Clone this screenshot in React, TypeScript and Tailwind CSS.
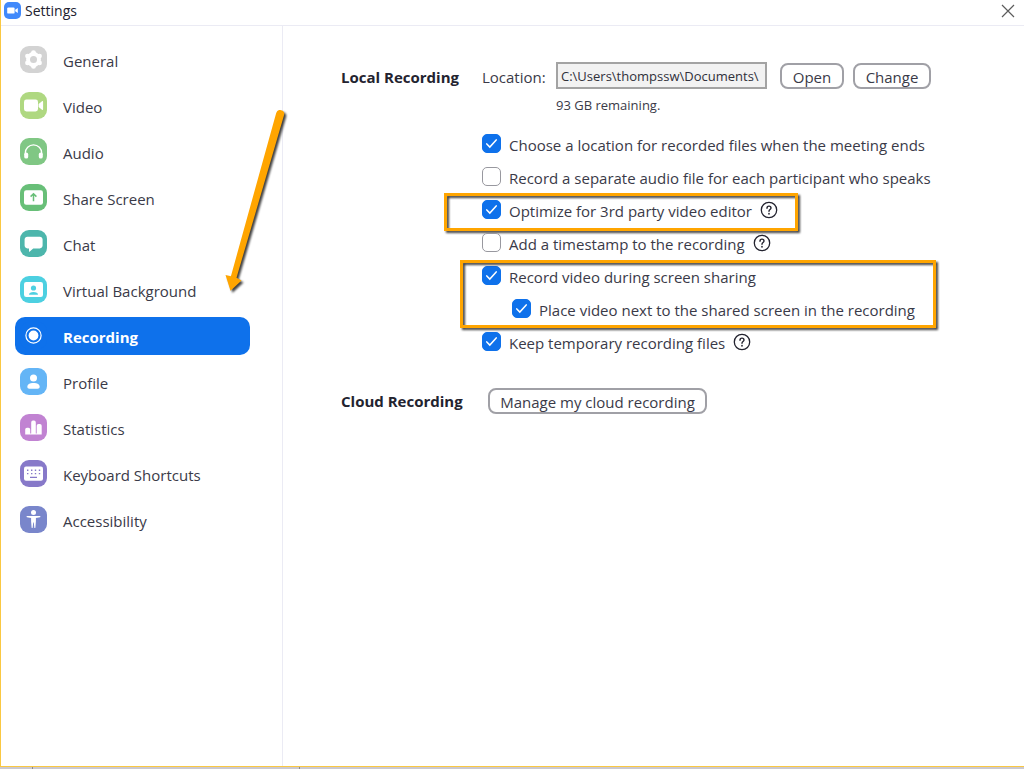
import type { ReactNode } from 'react';

interface NavItem {
  label: string;
  color: string;
  icon: ReactNode;
}

const NAV_ITEMS: NavItem[] = [
  {
    label: 'General',
    color: 'bg-[#d3d3d3]',
    icon: (
      <>
        <g fill="#fff">
          <circle cx="13.5" cy="13.5" r="7.4" />
          <circle cx="13.5" cy="6.6" r="2.4" />
          <circle cx="19.5" cy="10.1" r="2.4" />
          <circle cx="19.5" cy="16.9" r="2.4" />
          <circle cx="13.5" cy="20.4" r="2.4" />
          <circle cx="7.5" cy="16.9" r="2.4" />
          <circle cx="7.5" cy="10.1" r="2.4" />
        </g>
        <circle cx="13.5" cy="13.5" r="3.5" fill="#d3d3d3" />
      </>
    ),
  },
  {
    label: 'Video',
    color: 'bg-[#afd881]',
    icon: (
      <g fill="#fff">
        <rect x="4" y="7.5" width="14" height="12" rx="2.4" />
        <path d="M18.6 11.9 22 9.3c.5-.4 1.1-.1 1.1.5v7.4c0 .6-.6.9-1.1.5l-3.4-2.6z" />
      </g>
    ),
  },
  {
    label: 'Audio',
    color: 'bg-[#80c784]',
    icon: (
      <>
        <path d="M5.3 17v-2a8.2 8.2 0 0 1 16.4 0v2" fill="none" stroke="#fff" strokeWidth="1.3" />
        <rect x="4.2" y="14.6" width="4" height="6" rx="1.9" fill="#fff" />
        <rect x="18.8" y="14.6" width="4" height="6" rx="1.9" fill="#fff" />
      </>
    ),
  },
  {
    label: 'Share Screen',
    color: 'bg-[#68bf78]',
    icon: (
      <>
        <rect x="4" y="6.2" width="19" height="14.6" rx="2.2" fill="#fff" />
        <path d="M13.5 17.3v-7M10.6 12.6l2.9-2.9 2.9 2.9" fill="none" stroke="#68bf78" strokeWidth="1.5" />
      </>
    ),
  },
  {
    label: 'Chat',
    color: 'bg-[#4db6ac]',
    icon: (
      <path
        d="M7.4 6.8h12.4c1.6 0 2.8 1.2 2.8 2.8v6c0 1.6-1.2 2.8-2.8 2.8h-6.6l-3.4 3.2c-.4.4-.8.2-.8-.3v-2.9H7.4c-1.6 0-2.8-1.2-2.8-2.8v-6c0-1.6 1.2-2.8 2.8-2.8z"
        fill="#fff"
      />
    ),
  },
  {
    label: 'Virtual Background',
    color: 'bg-[#4dd0e1]',
    icon: (
      <>
        <rect x="4" y="6" width="19" height="15" rx="2.2" fill="#fff" />
        <circle cx="13.5" cy="12" r="2.6" fill="#4dd0e1" />
        <path d="M9 18.8c0-2 1.8-2.9 4.5-2.9s4.5.9 4.5 2.9z" fill="#4dd0e1" />
      </>
    ),
  },
  {
    label: 'Recording',
    color: 'bg-[#0e71eb]',
    icon: (
      <>
        <circle cx="13.5" cy="13.5" r="7.6" fill="none" stroke="#fff" strokeWidth="1.2" />
        <circle cx="13.5" cy="13.5" r="4.9" fill="#fff" />
      </>
    ),
  },
  {
    label: 'Profile',
    color: 'bg-[#64b5f6]',
    icon: (
      <g fill="#fff">
        <circle cx="13.5" cy="9.9" r="3.5" />
        <path d="M7.3 18.7c0-2.5 2.4-3.8 6.2-3.8s6.2 1.3 6.2 3.8c0 1.3-.8 2-2 2H9.3c-1.2 0-2-.7-2-2z" />
      </g>
    ),
  },
  {
    label: 'Statistics',
    color: 'bg-[#c183d2]',
    icon: (
      <path
        d="M5.2 20.5v-5a1.8 1.8 0 0 1 1.8-1.8h1.4a1.8 1.8 0 0 1 1.8 1.8v3.9h1V8.4A1.8 1.8 0 0 1 13 6.6h1a1.8 1.8 0 0 1 1.8 1.8v11h.9v-7.6a1.8 1.8 0 0 1 1.8-1.8h1.4a1.8 1.8 0 0 1 1.8 1.8v8.7z"
        fill="#fff"
      />
    ),
  },
  {
    label: 'Keyboard Shortcuts',
    color: 'bg-[#8779c9]',
    icon: (
      <>
        <rect x="4" y="6.5" width="19" height="14.2" rx="2" fill="#fff" />
        <path
          d="M7 10.2h1.4M11 10.2h1.4M14.8 10.2h1.4M18.8 10.2h1.4M7 13.6h1.4M11 13.6h1.4M14.8 13.6h1.4M18.8 13.6h1.4M10 17.4h7"
          stroke="#8779c9"
          strokeWidth="1.4"
        />
      </>
    ),
  },
  {
    label: 'Accessibility',
    color: 'bg-[#7986cb]',
    icon: (
      <g fill="#fff">
        <circle cx="13.5" cy="6.6" r="2.5" />
        <path d="M7 10h13c.6 0 .6 1.1 0 1.3l-4.1.8v3.4l-.5 6c-.1.8-1 .8-1.1 0l-.5-4.9h-.6l-.5 4.9c-.1.8-1 .8-1.1 0l-.5-6v-3.4L7 11.3c-.6-.2-.6-1.3 0-1.3z" />
      </g>
    ),
  },
];

interface RecordingOption {
  id: string;
  label: string;
  checked: boolean;
  help?: boolean;
  indent?: boolean;
}

const BEFORE_OPTIONS: RecordingOption[] = [
  { id: 'choose-location', label: 'Choose a location for recorded files when the meeting ends', checked: true },
  { id: 'separate-audio', label: 'Record a separate audio file for each participant who speaks', checked: false },
];

export default function App() {
  return (
    <div className="flex min-h-screen flex-col bg-white font-['Open_Sans','Noto_Sans',sans-serif] text-[15px] leading-5 text-[#3a3a48]">
      <div className="flex flex-1 flex-col border-b border-l border-[#fac842]">
        <TitleBar />
        <div className="relative flex flex-1">
          <Sidebar />
          <RecordingPanel />
          <Arrow />
        </div>
      </div>
      <div className="flex h-0.5 bg-[#cbc9d0]">
        <div className="ml-8 w-px bg-[#8a8a8a]" />
        <div className="ml-[266px] w-px bg-[#8a8a8a]" />
      </div>
    </div>
  );
}

function TitleBar() {
  return (
    <header className="flex h-[26px] items-center justify-between border-b border-[#ebebf4] pr-2 pb-1 pl-[3px] text-[#222230]">
      <div className="flex items-center gap-1">
        <svg viewBox="0 0 17 17" className="size-[17px]" aria-hidden="true">
          <rect width="17" height="17" rx="5" fill="#4189fb" />
          <rect x="3.2" y="5.4" width="7.4" height="6.2" rx="1.2" fill="#fff" />
          <path d="M11.2 7.8l2.6-1.9v5.2l-2.6-1.9z" fill="#fff" />
        </svg>
        <h1 className="text-sm leading-5">Settings</h1>
      </div>
      <button type="button" aria-label="Close" className="size-4">
        <svg viewBox="0 0 16 16" className="size-4" fill="none" stroke="#5c5c5c" strokeWidth="1.2">
          <path d="M2 2l12 12M14 2L2 14" />
        </svg>
      </button>
    </header>
  );
}

function Sidebar() {
  return (
    <nav className="flex w-[282px] shrink-0 flex-col gap-2 border-r border-[#ebebf4] pt-[15px] pr-8 pl-[14px]">
      {NAV_ITEMS.map((item) => {
        const active = item.label === 'Recording';
        return (
          <a
            key={item.label}
            href="#"
            aria-current={active ? 'page' : undefined}
            className={`flex h-[38px] items-center gap-4 rounded-[10px] pl-[5px] ${
              active ? 'bg-[#0e71eb] font-bold text-white' : ''
            }`}
          >
            <span className={`mb-0.5 size-[27px] rounded-[9px] ${item.color}`}>
              <svg viewBox="0 0 27 27" className="size-[27px]" aria-hidden="true">
                {item.icon}
              </svg>
            </span>
            <span className="pt-0.5">{item.label}</span>
          </a>
        );
      })}
    </nav>
  );
}

function RecordingPanel() {
  return (
    <main className="flex-1 pt-9 pl-[58px]">
      <section className="flex">
        <h2 className="w-[141px] shrink-0 pt-[5px] font-bold text-[#23232f]">Local Recording</h2>
        <div>
          <div className="flex">
            <label htmlFor="location" className="w-[74px] shrink-0 pt-[5px]">
              Location:
            </label>
            <input
              id="location"
              readOnly
              defaultValue={'C:\\Users\\thompssw\\Documents\\'}
              className="h-[27px] w-[211px] border-2 border-[#a3a3a3] bg-[#f2f2f2] px-[3px] text-[13px] text-[#30303a]"
            />
            <div className="ml-[13px] flex gap-[9px] pt-px">
              <OutlineButton width="w-16">Open</OutlineButton>
              <OutlineButton width="w-[78px]">Change</OutlineButton>
            </div>
          </div>
          <p className="pt-[6px] pl-[74px] text-[13px] leading-5">93 GB remaining.</p>

          <div className="pt-3">
            {BEFORE_OPTIONS.map((option) => (
              <OptionRow key={option.id} option={option} />
            ))}
            <div className="relative">
              <OptionRow
                option={{ id: 'optimize', label: 'Optimize for 3rd party video editor', checked: true, help: true }}
              />
              <Highlight className="top-0 -left-[38px] h-[38px] w-[354px]" />
            </div>
            <OptionRow
              option={{ id: 'timestamp', label: 'Add a timestamp to the recording', checked: false, help: true }}
            />
            <div className="relative">
              <OptionRow
                option={{ id: 'record-video', label: 'Record video during screen sharing', checked: true }}
              />
              <OptionRow
                option={{
                  id: 'place-video',
                  label: 'Place video next to the shared screen in the recording',
                  checked: true,
                  indent: true,
                }}
              />
              <Highlight className="top-px -left-[22px] h-[68px] w-[476px]" />
            </div>
            <OptionRow
              option={{ id: 'keep-temp', label: 'Keep temporary recording files', checked: true, help: true }}
            />
          </div>
        </div>
      </section>

      <section className="flex pt-[30px]">
        <h2 className="w-[147px] shrink-0 pt-[3px] font-bold text-[#23232f]">Cloud Recording</h2>
        <OutlineButton width="w-[219px]">Manage my cloud recording</OutlineButton>
      </section>
    </main>
  );
}

function OutlineButton({ width, children }: { width: string; children: ReactNode }) {
  return (
    <button
      type="button"
      className={`flex h-[26px] items-center justify-center rounded-lg border-2 border-[#a0a0a6] pt-0.5 whitespace-nowrap ${width}`}
    >
      {children}
    </button>
  );
}

function OptionRow({ option }: { option: RecordingOption }) {
  return (
    <div className={`flex h-[33px] items-center ${option.indent ? 'pl-[30px]' : ''}`}>
      <span className="relative mr-2 flex size-[19px] shrink-0">
        <input
          id={option.id}
          type="checkbox"
          defaultChecked={option.checked}
          className="peer size-[19px] appearance-none rounded-[5px] border border-[#98989f] bg-white checked:border-[#0e71eb] checked:bg-[#0e71eb]"
        />
        <svg
          viewBox="0 0 19 19"
          className="pointer-events-none absolute inset-0 hidden size-[19px] peer-checked:block"
          fill="none"
          stroke="#fff"
          strokeWidth="1.5"
          strokeLinecap="round"
        >
          <path d="M4.8 9.9l3 3.2 6.4-7.2" />
        </svg>
      </span>
      <label htmlFor={option.id} className="pt-0.5 whitespace-nowrap">
        {option.label}
      </label>
      {option.help && (
        <button type="button" aria-label="Help" className="ml-2 pt-px">
          <svg viewBox="0 0 18 18" className="size-[18px]" fill="none" stroke="#23232f" strokeLinecap="round">
            <circle cx="9" cy="9" r="7.7" strokeWidth="1.3" />
            <path d="M7 7.2c0-1.3.9-2.1 2-2.1s2 .8 2 1.9c0 1.5-2 1.6-2 3.2" strokeWidth="1.4" />
            <path d="M9 12.7v.1" strokeWidth="1.7" />
          </svg>
        </button>
      )}
    </div>
  );
}

// Orange frame drawn over the options it calls out
function Highlight({ className }: { className: string }) {
  return (
    <div
      className={`pointer-events-none absolute border-3 border-[#ffa500] drop-shadow-[2px_2px_1px_rgba(0,0,0,0.75)] ${className}`}
    />
  );
}

function Arrow() {
  return (
    <svg
      viewBox="0 0 70 190"
      className="pointer-events-none absolute top-[79px] left-[219px] h-[190px] w-[70px] drop-shadow-[2px_2px_1px_rgba(0,0,0,0.75)]"
      aria-hidden="true"
    >
      <path
        d="M56.2 8a4 4 0 0 1 7.8 2.2L16.5 172.8l5 2.7-11 10.2-5-15.7 5.4 1.2z"
        fill="#ffa500"
      />
    </svg>
  );
}
